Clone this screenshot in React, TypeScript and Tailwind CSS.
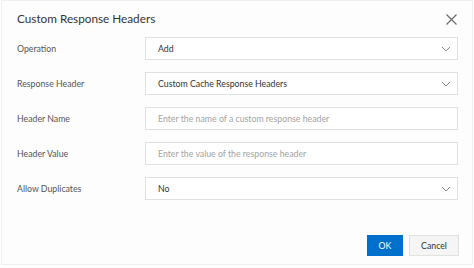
const font = { fontFamily: 'Lato, "Noto Sans", Arial, sans-serif' };

function SelectField({ value }: { value: string }) {
  return (
    <div className="w-[313px] h-[23px] border border-[#e1e1e1] bg-white flex items-center justify-between pl-[12px] pr-[6px]">
      <span className="text-[8.75px] text-[#333]">{value}</span>
      <svg width="10" height="6" viewBox="0 0 10 6" fill="none">
        <path d="M1 1l4 4 4-4" stroke="#8a8a8a" strokeWidth="1" />
      </svg>
    </div>
  );
}

function InputField({ placeholder }: { placeholder: string }) {
  return (
    <div className="w-[313px] h-[23px] border border-[#e1e1e1] bg-white flex items-center pl-[12px]">
      <span className="text-[8.75px] text-[#a3a3a3]">{placeholder}</span>
    </div>
  );
}

export default function App() {
  const rows = [
    { label: 'Operation', el: <SelectField value="Add" /> },
    { label: 'Response Header', el: <SelectField value="Custom Cache Response Headers" /> },
    { label: 'Header Name', el: <InputField placeholder="Enter the name of a custom response header" /> },
    { label: 'Header Value', el: <InputField placeholder="Enter the value of the response header" /> },
    { label: 'Allow Duplicates', el: <SelectField value="No" /> },
  ];

  return (
    <div className="w-[474px] h-[268px] bg-white overflow-hidden" style={font}>
      <div className="w-[472px] h-[265px] ml-[1px] border border-[#efefef] bg-[#fdfdfd] flex flex-col">
        {/* header */}
        <div className="h-[36px] flex items-center justify-between pl-[15px] pr-[15px]">
          <span className="text-[11.75px] text-[#333]">Custom Response Headers</span>
          <svg width="11" height="11" viewBox="0 0 11 11" fill="none">
            <path d="M0.5 0.5l10 10M10.5 0.5l-10 10" stroke="#666" strokeWidth="1.1" />
          </svg>
        </div>

        {/* form rows */}
        <div className="flex flex-col gap-[12px]">
          {rows.map(r => (
            <div key={r.label} className="flex items-center">
              <span className="w-[143px] shrink-0 pl-[15px] text-[8.75px] text-[#555]">{r.label}</span>
              {r.el}
            </div>
          ))}
        </div>

        {/* footer */}
        <div className="flex justify-end gap-[6px] pr-[13px] mt-[35px]">
          <button className="w-[36px] h-[21px] bg-[#0070cc] text-white text-[8.75px]">OK</button>
          <button className="w-[50px] h-[21px] bg-[#f5f5f5] border border-[#e1e1e1] text-[#333] text-[8.75px]">Cancel</button>
        </div>
      </div>
    </div>
  );
}
